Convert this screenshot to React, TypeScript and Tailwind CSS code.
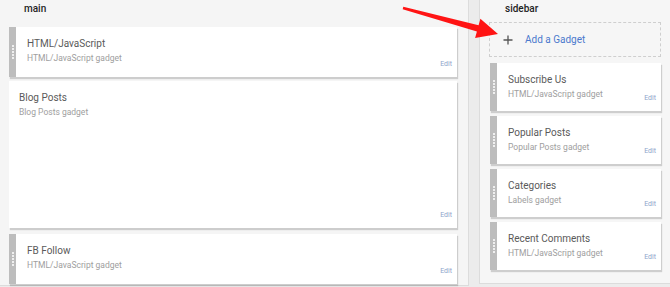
import React from 'react';

interface GadgetProps {
  title: string;
  sub: string;
  handle?: boolean;
  height: string;
  className?: string;
}

const Handle: React.FC = () => (
  <div className="w-[7px] shrink-0 bg-[#bdbdbd] flex flex-col items-center justify-center gap-[1.5px]">
    {[0, 1, 2, 3, 4].map((i) => (
      <span key={i} className="block w-[2px] h-[1.5px] bg-[#f0f0f0]" />
    ))}
  </div>
);

const Gadget: React.FC<GadgetProps> = ({ title, sub, handle = true, height, className = '' }) => (
  <div className={`flex bg-white shadow-[1px_2px_1px_rgba(0,0,0,0.16)] ${height} ${className}`}>
    {handle && <Handle />}
    <div className={`flex-1 flex ${handle ? 'pl-[11px]' : 'pl-[10px]'} pr-[5px]`}>
      <div className="flex-1 pt-[11px]">
        <div className="text-[10px] leading-[12px] text-[#5a5a5a]">{title}</div>
        <div className="mt-[3px] text-[8.5px] leading-[11px] text-[#9e9e9e]">{sub}</div>
      </div>
      <div className="flex flex-col justify-end pb-[9px]">
        <span className="text-[7px] leading-[8px] text-[#8ea5cb]">Edit</span>
      </div>
    </div>
  </div>
);

const Arrow: React.FC = () => {
  const tail = [403, 8];
  const tip = [498, 34];
  const dx = tip[0] - tail[0];
  const dy = tip[1] - tail[1];
  const len = Math.hypot(dx, dy);
  const u = [dx / len, dy / len];
  const n = [-u[1], u[0]];
  const base = [tip[0] - 21 * u[0], tip[1] - 21 * u[1]];
  const p = (c: number[], k: number) => `${c[0] + k * n[0]},${c[1] + k * n[1]}`;
  const pts = [p(tail, -1.2), p(base, -3.2), p(base, -10), `${tip[0]},${tip[1]}`, p(base, 10), p(base, 3.2), p(tail, 1.2)].join(' ');
  return (
    <svg className="absolute left-0 top-0 pointer-events-none" width="670" height="287">
      <polygon points={pts} fill="#ff1414" />
    </svg>
  );
};

const App: React.FC = () => {
  return (
    <div className="relative w-[670px] h-[287px] overflow-hidden bg-[#ececec] flex items-start font-['Roboto',sans-serif]">
      <section className="w-[469px] h-[286px] shrink-0 bg-[#f5f5f5] border-r border-b border-[#dcdcdc] pl-[9px] pr-[11px] flex flex-col">
        <div className="h-[27px] pl-[15px] pt-[4px] text-[10px] leading-[10px] font-medium text-[#1f1f1f]">main</div>
        <Gadget title="HTML/JavaScript" sub="HTML/JavaScript gadget" height="h-[50px]" />
        <Gadget title="Blog Posts" sub="Blog Posts gadget" handle={false} height="h-[147px]" className="mt-[4px]" />
        <Gadget title="FB Follow" sub="HTML/JavaScript gadget" height="h-[50px]" className="mt-[6px]" />
      </section>

      <div className="w-[10px] shrink-0" />

      <section className="w-[191px] h-[284px] shrink-0 bg-[#f6f6f6] border-l border-b border-[#dcdcdc] pl-[9px] pr-[9px] flex flex-col">
        <div className="h-[22px] pl-[16px] pt-[4px] text-[10px] leading-[10px] font-medium text-[#1f1f1f]">sidebar</div>
        <div className="h-[35px] border border-dashed border-[#cfcfcf] flex items-center pl-[13px]">
          <svg width="10" height="10" viewBox="0 0 10 10" className="shrink-0">
            <path d="M5 0.5v9M0.5 5h9" stroke="#555" strokeWidth="1.3" />
          </svg>
          <span className="ml-[12px] text-[10px] text-[#4b79cd]">Add a Gadget</span>
        </div>
        <div className="ml-[1px] mt-[6px] flex flex-col gap-[5px]">
          <Gadget title="Subscribe Us" sub="HTML/JavaScript gadget" height="h-[48px]" />
          <Gadget title="Popular Posts" sub="Popular Posts gadget" height="h-[48px]" />
          <Gadget title="Categories" sub="Labels gadget" height="h-[48px]" />
          <Gadget title="Recent Comments" sub="HTML/JavaScript gadget" height="h-[48px]" />
        </div>
      </section>

      <Arrow />
    </div>
  );
};

export default App;
